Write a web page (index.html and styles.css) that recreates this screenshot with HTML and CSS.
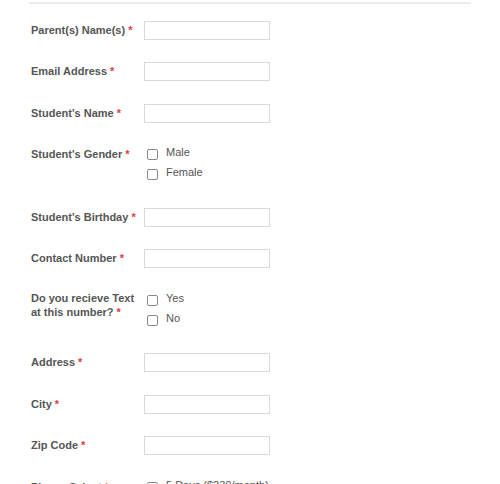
FILE: index.html
```html
<!DOCTYPE html>
<html>
<head>
<meta charset="utf-8">
<link rel="stylesheet" href="styles.css">
</head>
<body>
<div class="page">
  <form class="form">
    <div class="row">
      <label class="lbl">Parent(s) Name(s) <span class="req">*</span></label>
      <div class="field"><input class="txt" type="text"></div>
    </div>
    <div class="row">
      <label class="lbl">Email Address <span class="req">*</span></label>
      <div class="field"><input class="txt" type="text"></div>
    </div>
    <div class="row">
      <label class="lbl">Student's Name <span class="req">*</span></label>
      <div class="field"><input class="txt" type="text"></div>
    </div>
    <div class="row">
      <label class="lbl">Student's Gender <span class="req">*</span></label>
      <div class="field opts">
        <div class="opt"><span class="box"></span><span class="opt-text">Male</span></div>
        <div class="opt"><span class="box"></span><span class="opt-text">Female</span></div>
      </div>
    </div>
    <div class="row">
      <label class="lbl">Student's Birthday <span class="req">*</span></label>
      <div class="field"><input class="txt" type="text"></div>
    </div>
    <div class="row">
      <label class="lbl">Contact Number <span class="req">*</span></label>
      <div class="field"><input class="txt" type="text"></div>
    </div>
    <div class="row">
      <label class="lbl lbl-multi">Do you recieve Text at this number? <span class="req">*</span></label>
      <div class="field opts">
        <div class="opt"><span class="box"></span><span class="opt-text">Yes</span></div>
        <div class="opt"><span class="box"></span><span class="opt-text">No</span></div>
      </div>
    </div>
    <div class="row">
      <label class="lbl">Address <span class="req">*</span></label>
      <div class="field"><input class="txt" type="text"></div>
    </div>
    <div class="row">
      <label class="lbl">City <span class="req">*</span></label>
      <div class="field"><input class="txt" type="text"></div>
    </div>
    <div class="row">
      <label class="lbl">Zip Code <span class="req">*</span></label>
      <div class="field"><input class="txt" type="text"></div>
    </div>
    <div class="row">
      <label class="lbl">Please Select <span class="req">*</span></label>
      <div class="field opts">
        <div class="opt"><span class="box"></span><span class="opt-text">5 Days ($230/month)</span></div>
        <div class="opt"><span class="box"></span><span class="opt-text">3 Days ($160/month)</span></div>
      </div>
    </div>
  </form>
</div>
</body>
</html>
```
FILE: styles.css
```css
html, body {
  margin: 0;
  padding: 0;
  background: #ffffff;
}
body {
  font-family: "Liberation Sans", Arial, Helvetica, sans-serif;
  font-size: 11px;
  color: #555555;
  overflow: hidden;
  height: 484px;
}
.page {
  padding: 2px 29px 0 29px;
}
.form {
  border-top: 2px solid #ececec;
  padding-top: 5.25px;
}
.row {
  display: flex;
  align-items: flex-start;
  padding: 11.25px 0 11.25px 2px;
}
.lbl {
  width: 113px;
  flex: none;
  font-weight: bold;
  line-height: 19px;
  color: #555555;
}
.lbl-multi {
  line-height: 14px;
  width: 106px;
  margin-right: 7px;
}
.req {
  color: #e03b3b;
}
.field {
  flex: none;
}
.txt {
  display: block;
  box-sizing: border-box;
  width: 126px;
  height: 19px;
  margin: 0;
  padding: 0 4px;
  border: 1px solid #d9d9d9;
  border-radius: 0;
  background: #ffffff;
  font-family: inherit;
  font-size: 11px;
  outline: none;
}
.opts {
  display: flex;
  flex-direction: column;
  margin-top: -2px;
  margin-bottom: 2px;
}
.opt {
  display: flex;
  align-items: center;
  height: 20px;
}
.box {
  box-sizing: border-box;
  width: 11px;
  height: 11px;
  margin-left: 3px;
  margin-right: 8px;
  margin-top: 3px;
  border: 1px solid #8a8a8a;
  border-radius: 2px;
  background: #ffffff;
}
.opt-text {
  font-size: 11px;
  color: #555555;
  line-height: 14px;
  margin-top: -2px;
}
```
